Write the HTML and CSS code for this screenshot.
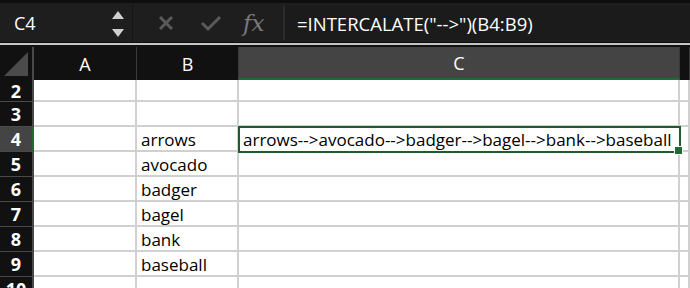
FILE: index.html
```html
<!DOCTYPE html>
<html>
  <head>
    <meta charset="UTF-8" />
    <title>Sheet</title>
    <link rel="stylesheet" href="styles.css">
  </head>
  <body>
    <div class="formula-bar">
      <div class="name-box">
        <span class="name-text">C4</span>
        <span class="spinner">
          <svg width="14" height="30" viewBox="0 0 14 30">
            <polygon points="7,2 13,10 1,10" fill="#cfcfcf" />
            <polygon points="1,20 13,20 7,28" fill="#cfcfcf" />
          </svg>
        </span>
      </div>
      <div class="bar-actions">
        <svg class="icon" width="18" height="18" viewBox="0 0 18 18">
          <path d="M3 3 L15 15 M15 3 L3 15" stroke="#5a5a5a" stroke-width="3" fill="none" />
        </svg>
        <svg class="icon" width="22" height="18" viewBox="0 0 22 18">
          <path d="M2 9 L8 15 L20 3" stroke="#5a5a5a" stroke-width="3" fill="none" />
        </svg>
        <span class="fx">fx</span>
      </div>
      <div class="formula-input">=INTERCALATE("--&gt;")(B4:B9)</div>
    </div>

    <div class="sheet">
      <div class="hdr corner"><span class="corner-tri"></span></div>
      <div class="hdr">A</div>
      <div class="hdr">B</div>
      <div class="hdr selected-col">C</div>
      <div class="hdr"></div>

      <div class="rownum short">2</div>
      <div class="cell short"></div><div class="cell short"></div><div class="cell short"></div><div class="cell short"></div>

      <div class="rownum">3</div>
      <div class="cell"></div><div class="cell"></div><div class="cell"></div><div class="cell"></div>

      <div class="rownum selected-row">4</div>
      <div class="cell"></div><div class="cell">arrows</div>
      <div class="cell active">arrows--&gt;avocado--&gt;badger--&gt;bagel--&gt;bank--&gt;baseball<span class="handle"></span></div>
      <div class="cell"></div>

      <div class="rownum">5</div>
      <div class="cell"></div><div class="cell">avocado</div><div class="cell"></div><div class="cell"></div>

      <div class="rownum">6</div>
      <div class="cell"></div><div class="cell">badger</div><div class="cell"></div><div class="cell"></div>

      <div class="rownum">7</div>
      <div class="cell"></div><div class="cell">bagel</div><div class="cell"></div><div class="cell"></div>

      <div class="rownum">8</div>
      <div class="cell"></div><div class="cell">bank</div><div class="cell"></div><div class="cell"></div>

      <div class="rownum">9</div>
      <div class="cell"></div><div class="cell">baseball</div><div class="cell"></div><div class="cell"></div>

      <div class="rownum">10</div>
      <div class="cell"></div><div class="cell"></div><div class="cell"></div><div class="cell"></div>
    </div>
  </body>
</html>
```

FILE: styles.css
```css
body {
  margin: 0;
  width: 690px;
  height: 288px;
  overflow: hidden;
  background: #111;
  font-family: 'Open Sans', 'Liberation Sans', Arial, sans-serif;
}

.formula-bar {
  display: flex;
  height: 39px;
  border-top: 3px solid #0e0e0e;
  border-bottom: 1px solid #0e0e0e;
  background: #1e1e1e;
  color: #fff;
}

.name-box {
  width: 133px;
  display: flex;
  align-items: center;
  justify-content: space-between;
  padding: 0 7px 0 14px;
  box-sizing: border-box;
  border-right: 1px solid #161616;
}

.name-text {
  font-size: 18px;
}

.spinner {
  display: flex;
  margin-top: 2px;
}

.bar-actions {
  width: 150px;
  display: flex;
  align-items: center;
  padding-left: 24px;
  gap: 25px;
  box-sizing: border-box;
}

.fx {
  font-family: 'DejaVu Serif', 'Liberation Serif', serif;
  font-style: italic;
  font-size: 23px;
  color: #7a7a7a;
  margin-left: -4px;
}

.formula-input {
  flex: 1;
  display: flex;
  align-items: center;
  padding-left: 12px;
  border-left: 2px solid #2c2c2c;
  background: #1b1b1b;
  font-size: 18.5px;
  margin: 3px 0 2px;
}

.sheet {
  display: grid;
  grid-template-columns: 34px 103px 102px 441px 1fr;
  grid-template-rows: 33px 22px repeat(8, 25px);
  border-top: 2px solid #c6c6c6;
  padding-top: 2px;
  background: #111;
}

.hdr {
  background: #111;
  color: #fff;
  font-size: 18px;
  display: flex;
  align-items: center;
  justify-content: center;
  border-right: 1px solid #3a3a3a;
  box-sizing: border-box;
}

.corner {
  position: relative;
  border-right: 2px solid #4a4a4a;
}

.corner-tri {
  position: absolute;
  right: 4px;
  bottom: 4px;
  width: 0;
  height: 0;
  border-left: 24px solid transparent;
  border-bottom: 24px solid #4b4b4b;
}

.selected-col {
  background: #444;
  border-bottom: 2px solid #1e6b33;
}

.rownum {
  background: #111;
  color: #fff;
  font-weight: bold;
  font-size: 18px;
  display: flex;
  align-items: center;
  justify-content: center;
  border-right: 2px solid #4a4a4a;
  border-bottom: 1px solid #4a4a4a;
  box-sizing: border-box;
}

.selected-row {
  background: #444;
  border-right: 2px solid #1e6b33;
}

.cell {
  position: relative;
  background: #fff;
  color: #000;
  font-size: 17px;
  display: flex;
  align-items: center;
  padding: 1px 0 0 4px;
  white-space: nowrap;
  border-right: 2px solid #d0d0d0;
  border-bottom: 2px solid #d0d0d0;
  box-sizing: border-box;
}

.active {
  outline: 2px solid #1e5c2e;
  outline-offset: -1px;
  border-color: transparent;
  z-index: 1;
}

.handle {
  position: absolute;
  right: -5px;
  bottom: -5px;
  width: 7px;
  height: 7px;
  background: #1e6b33;
  border: 1px solid #fff;
}
```
